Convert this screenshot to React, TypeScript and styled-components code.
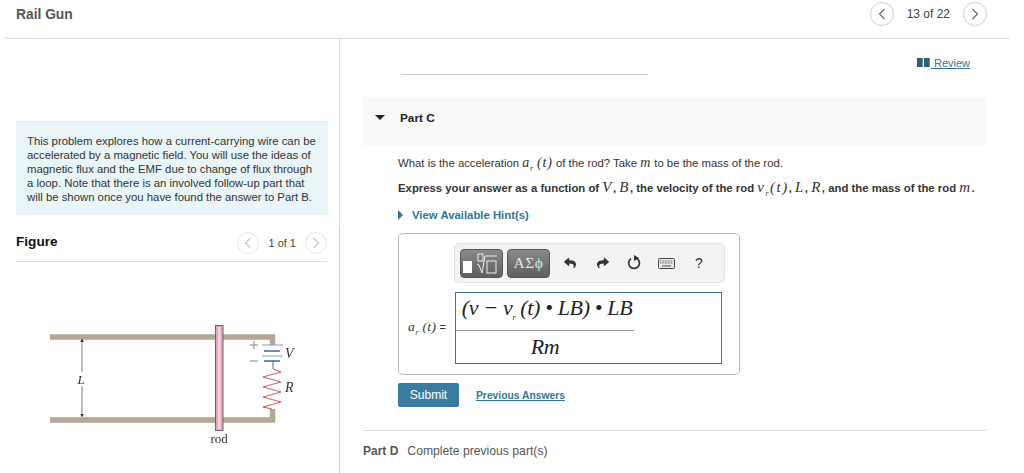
import React from 'react';
import styled, { createGlobalStyle } from 'styled-components';
import { FaReply, FaShare } from 'react-icons/fa';

const Global = createGlobalStyle`
  html, body { margin: 0; padding: 0; background: #fff; }
  body { font-family: "Liberation Sans", Arial, sans-serif; color: #333; }
  #root { width: 1024px; height: 473px; overflow: hidden; }
`;

const Page = styled.div`
  width: 1024px;
  height: 473px;
  display: flex;
  flex-direction: column;
  overflow: hidden;
`;
const Header = styled.header`
  height: 38px;
  margin: 0 14px 0 4px;
  padding: 0 23px 0 12px;
  display: flex;
  align-items: center;
  justify-content: space-between;
  border-bottom: 1px solid #dcdcdc;
  box-sizing: content-box;
  flex: none;
`;
const Title = styled.h1`
  margin: 0 0 10px;
  font-size: 13.8px;
  font-weight: 700;
  color: #555;
`;
const Pager = styled.div<{ $gap: number; $fs: number }>`
  display: flex;
  align-items: center;
  gap: ${p => p.$gap}px;
  font-size: ${p => p.$fs}px;
  color: #444;
`;
const HeaderPager = styled(Pager)`
  margin-bottom: 10px;
`;
const FigurePager = styled(Pager)`
  margin-top: 3px;
`;
const Circle = styled.span<{ $size: number; $dim?: boolean }>`
  width: ${p => p.$size}px;
  height: ${p => p.$size}px;
  box-sizing: border-box;
  border: 1px solid ${p => (p.$dim ? '#e4e4e4' : '#cfcfcf')};
  border-radius: 50%;
  display: flex;
  align-items: center;
  justify-content: center;
  color: ${p => (p.$dim ? '#c4c4c4' : '#666')};
`;
const Body = styled.div`
  flex: 1;
  display: flex;
  margin-left: 4px;
  min-height: 0;
`;
const Left = styled.aside`
  width: 335px;
  flex: none;
  padding: 82px 11px 0 12px;
  box-sizing: border-box;
`;
const Divider = styled.div`
  width: 1px;
  flex: none;
  background: linear-gradient(#dedede 0 189px, #c3d2e6 189px);
`;
const Intro = styled.div`
  background: #e9f5f7;
  border-top: 1px solid #dfe6e6;
  height: 94px;
  box-sizing: border-box;
  padding: 12px 8px 0 11px;
  font-size: 11.35px;
  line-height: 14px;
  color: #333;
`;
const FigureHead = styled.div`
  height: 47px;
  display: flex;
  align-items: center;
  justify-content: space-between;
  border-bottom: 1px solid #ddd;
  box-sizing: border-box;
  padding-top: 6px;
  margin-right: 1px;
`;
const FigureTitle = styled.h2`
  margin: 0;
  font-size: 13.6px;
  font-weight: 700;
  color: #111;
`;
const FigureBox = styled.div`
  margin: 63px 0 0 34px;
  line-height: 0;
`;
const Right = styled.main`
  flex: 1;
  min-width: 0;
  padding: 0 37px 0 23px;
`;
const TopRow = styled.div`
  height: 58px;
  display: flex;
  padding: 0 17px 0 39px;
  justify-content: space-between;
  box-sizing: border-box;
`;
const Rule = styled.div`
  width: 246px;
  height: 35px;
  border-bottom: 1px solid #ccc;
`;
const Review = styled.a`
  display: flex;
  align-items: center;
  gap: 1px;
  height: 11px;
  margin-top: 18px;
  font-size: 11px;
  color: #2f7697;
  text-decoration: underline;
`;
const PartHead = styled.div`
  height: 49px;
  background: #f9f9f9;
  display: flex;
  padding: 15px 0 0 12px;
  box-sizing: border-box;
  font-size: 11.8px;
  font-weight: 700;
  color: #222;
  line-height: 13px;
`;
const DownTri = styled.span`
  width: 0;
  height: 0;
  margin: 3px 15px 0 0;
  border-left: 5px solid transparent;
  border-right: 5px solid transparent;
  border-top: 5px solid #222;
`;
const Content = styled.div`
  padding: 10px 0 0 35px;
`;
const M = styled.span`
  font-family: "Liberation Serif", serif;
  font-style: italic;
  font-weight: 400;
  font-size: 14px;
  letter-spacing: 0.8px;
`;
const Para = styled.p<{ $bold?: boolean }>`
  margin: 0 0 10px;
  font-size: 11.35px;
  line-height: 14px;
  font-weight: ${p => (p.$bold ? 700 : 400)};
  color: #333;
  white-space: nowrap;
  ${M} {
    font-size: ${p => (p.$bold ? 15 : 14)}px;
    letter-spacing: ${p => (p.$bold ? 1.5 : 0.8)}px;
  }
`;
const Sub = styled.sub`
  font-size: 8px;
  line-height: 0;
`;
const Hint = styled.div`
  display: flex;
  align-items: center;
  gap: 9px;
  margin-top: 13px;
  height: 14px;
  font-size: 11.35px;
  font-weight: 700;
  color: #2f7697;
`;
const RightTri = styled.span`
  width: 0;
  height: 0;
  border-top: 5px solid transparent;
  border-bottom: 5px solid transparent;
  border-left: 5px solid #2f7697;
`;
const AnswerBox = styled.div`
  width: 342px;
  height: 142px;
  margin-top: 11px;
  box-sizing: border-box;
  border: 1px solid #bbb;
  border-radius: 5px;
  padding: 9px 14px 0 55px;
`;
const Toolbar = styled.div`
  height: 40px;
  width: 271px;
  box-sizing: border-box;
  background: #f3f3f3;
  border: 1px solid #e2e2e2;
  border-radius: 5px;
  display: flex;
  align-items: center;
  padding-left: 5px;
`;
const ToolBtn = styled.div`
  width: 43px;
  height: 29px;
  margin-right: 4px;
  box-sizing: border-box;
  border: 1px solid #555;
  border-radius: 4px;
  background: linear-gradient(#8a8a8a, #5f5f5f);
  color: #e6e6e6;
  display: flex;
  align-items: center;
  justify-content: center;
  font-family: "Liberation Serif", serif;
  font-size: 15.5px;
  letter-spacing: 0.6px;
`;
const ToolIcon = styled.span<{ $w: number }>`
  width: ${p => p.$w}px;
  display: flex;
  justify-content: center;
  color: #333;
  font-size: 14px;
`;
const AnswerRow = styled.div`
  display: flex;
  align-items: center;
  margin: 9px 0 0 -46px;
`;
const AnswerLabel = styled.div`
  width: 47px;
  margin-top: -2px;
  font-size: 11px;
  white-space: nowrap;
  color: #333;
  ${M} {
    font-size: 13.5px;
    letter-spacing: 0.4px;
  }
`;
const Input = styled.div`
  width: 267px;
  height: 72px;
  box-sizing: border-box;
  border: 1px solid #3a7a9c;
`;
const Fraction = styled.div`
  width: 178px;
  display: flex;
  flex-direction: column;
  align-items: center;
  font-family: "Liberation Serif", serif;
  font-style: italic;
  font-size: 22px;
  letter-spacing: -0.35px;
  color: #222;
`;
const Num = styled.div`
  height: 38px;
  width: 100%;
  box-sizing: border-box;
  border-bottom: 1px solid #999;
  padding-left: 4px;
  text-align: center;
  line-height: 29px;
  white-space: nowrap;
`;
const Den = styled.div`
  line-height: 32px;
`;
const Actions = styled.div`
  display: flex;
  align-items: center;
  gap: 17px;
  margin-top: 8px;
`;
const Submit = styled.button`
  width: 61px;
  height: 24px;
  border: 0;
  border-radius: 2px;
  background: #3a7ca0;
  color: #fff;
  font-family: inherit;
  font-size: 12px;
  padding: 0;
`;
const PrevLink = styled.a`
  font-size: 10.3px;
  font-weight: 700;
  color: #2f7697;
  text-decoration: underline;
`;
const PartD = styled.div`
  margin-top: 23px;
  border-top: 1px solid #ddd;
  padding-top: 13px;
  display: flex;
  gap: 9px;
  font-size: 12.2px;
  line-height: 14px;
  color: #555;
  b { color: #555; font-size: 12px; }
`;

const Chevron = ({ dir, size = 8 }: { dir: 'l' | 'r'; size?: number }) => (
  <svg width={size} height={size * 1.5} viewBox="0 0 8 12" fill="none" stroke="currentColor" strokeWidth="1.1">
    <path d={dir === 'l' ? 'M6.5 1 1.5 6l5 5' : 'M1.5 1l5 5-5 5'} />
  </svg>
);

const Figure = () => (
  <svg width="250" height="130" viewBox="0 0 250 130" style={{ filter: 'blur(0.35px)' }}>
    <g fontFamily="'Liberation Serif', serif" fill="#333">
      <path d="M0 12h222.500v8" fill="none" stroke="#b3a796" strokeWidth="5.500" />
      <path d="M0 95h222.500v-11" fill="none" stroke="#b3a796" strokeWidth="5.500" />
      <rect x="165.500" y="0.500" width="7.500" height="105" fill="#e8a4bf" stroke="#666" strokeWidth="1" />
      <rect x="168" y="2" width="2.500" height="102" fill="#f4d3df" />
      <path d="M32 14v78" stroke="#444" strokeWidth="0.700" />
      <path d="M32 14l-1.800 3h3.600zM32 92l-1.800-3h3.600z" fill="#333" />
      <rect x="25" y="47" width="14" height="14" fill="#fff" />
      <text x="27.500" y="58.500" fontStyle="italic" fontSize="13">L</text>
      <path d="M212 20h21M212 31h21" stroke="#7c9bd0" strokeWidth="1" />
      <path d="M214 26h16M214 36h16" stroke="#3f64a8" strokeWidth="1.700" />
      <path d="M223 36v8" stroke="#444" strokeWidth="0.800" />
      <path d="M223 44l8 3-18 5 18 5-18 5 18 5-18 5 18 5-18 5 9 2" fill="none" stroke="#c4485a" strokeWidth="0.900" />
      <path d="M200 20h8M204 16v8M200 36h8" stroke="#777" strokeWidth="0.900" />
      <text x="235" y="32.500" fontStyle="italic" fontSize="14">V</text>
      <text x="235" y="67" fontStyle="italic" fontSize="14">R</text>
      <text x="160.500" y="118" fontSize="13">rod</text>
    </g>
  </svg>
);

const RootIcon = () => (
  <svg width="37" height="21" viewBox="0 0 37 21" fill="none">
    <rect x="0" y="8" width="9" height="12" fill="#fff" />
    <rect x="15" y="1" width="5" height="7" stroke="#eee" />
    <path d="M14 11l2 1 3 8 3-17h12" stroke="#eee" />
    <rect x="24" y="8" width="9" height="12" stroke="#eee" />
  </svg>
);

const Reset = () => (
  <svg width="15" height="16" viewBox="0 0 15 16" fill="none">
    <path d="M9.500 3.200A5.400 5.400 0 1 1 4 3.600" stroke="#333" strokeWidth="1.700" />
    <path d="M7 0l5 3-5 3z" fill="#333" />
  </svg>
);

const Keyboard = () => (
  <svg width="17" height="11" viewBox="0 0 17 11">
    <rect x="0.500" y="0.500" width="16" height="10" rx="1" fill="#e8e8e8" stroke="#444" />
    <path d="M2 3h13M2 5h13" stroke="#666" strokeWidth="1" strokeDasharray="1 0.600" />
    <path d="M4 8h9" stroke="#666" strokeWidth="1.200" />
  </svg>
);

const Book = () => (
  <svg width="13" height="9" viewBox="0 0 13 9">
    <path d="M0 0h5.700v9H0zM7 0h5.700v9H7z" fill="#2b5f7e" />
  </svg>
);

export default function App() {
  return (
    <Page>
      <Global />
      <Header>
        <Title>Rail Gun</Title>
        <HeaderPager $gap={13} $fs={12}>
          <Circle $size={24}><Chevron dir="l" /></Circle>
          <span>13 of 22</span>
          <Circle $size={24}><Chevron dir="r" /></Circle>
        </HeaderPager>
      </Header>
      <Body>
        <Left>
          <Intro>
            This problem explores how a current-carrying wire can be accelerated by a magnetic field. You will use the ideas of magnetic flux and the EMF due to change of flux through a loop. Note that there is an involved follow-up part that will be shown once you have found the answer to Part B.
          </Intro>
          <FigureHead>
            <FigureTitle>Figure</FigureTitle>
            <FigurePager $gap={9} $fs={11}>
              <Circle $size={22} $dim><Chevron dir="l" /></Circle>
              <span>1 of 1</span>
              <Circle $size={22} $dim><Chevron dir="r" /></Circle>
            </FigurePager>
          </FigureHead>
          <FigureBox><Figure /></FigureBox>
        </Left>
        <Divider />
        <Right>
          <TopRow>
            <Rule />
            <Review><Book /> <span>&nbsp;Review</span></Review>
          </TopRow>
          <PartHead><DownTri />Part C</PartHead>
          <Content>
            <Para>What is the acceleration <M>a<Sub>r</Sub></M> <M>(t)</M> of the rod? Take <M>m</M> to be the mass of the rod.</Para>
            <Para $bold>Express your answer as a function of <M>V</M>, <M>B</M>, the velocity of the rod <M>v<Sub>r</Sub>(t)</M>, <M>L</M>, <M>R</M>, and the mass of the rod <M>m</M>.</Para>
            <Hint><RightTri />View Available Hint(s)</Hint>
            <AnswerBox>
              <Toolbar>
                <ToolBtn><RootIcon /></ToolBtn>
                <ToolBtn>ΑΣϕ</ToolBtn>
                <ToolIcon $w={31}><FaReply size={12} /></ToolIcon>
                <ToolIcon $w={35}><FaShare size={12} /></ToolIcon>
                <ToolIcon $w={28}><Reset /></ToolIcon>
                <ToolIcon $w={36}><Keyboard /></ToolIcon>
                <ToolIcon $w={30}>?</ToolIcon>
              </Toolbar>
              <AnswerRow>
                <AnswerLabel><M>a<Sub>r</Sub> (t)</M> =</AnswerLabel>
                <Input>
                  <Fraction>
                    <Num>(v − v<Sub>r</Sub> (t) • LB) • LB</Num>
                    <Den>Rm</Den>
                  </Fraction>
                </Input>
              </AnswerRow>
            </AnswerBox>
            <Actions>
              <Submit>Submit</Submit>
              <PrevLink>Previous Answers</PrevLink>
            </Actions>
          </Content>
          <PartD><b>Part D</b><span>Complete previous part(s)</span></PartD>
        </Right>
      </Body>
    </Page>
  );
}
